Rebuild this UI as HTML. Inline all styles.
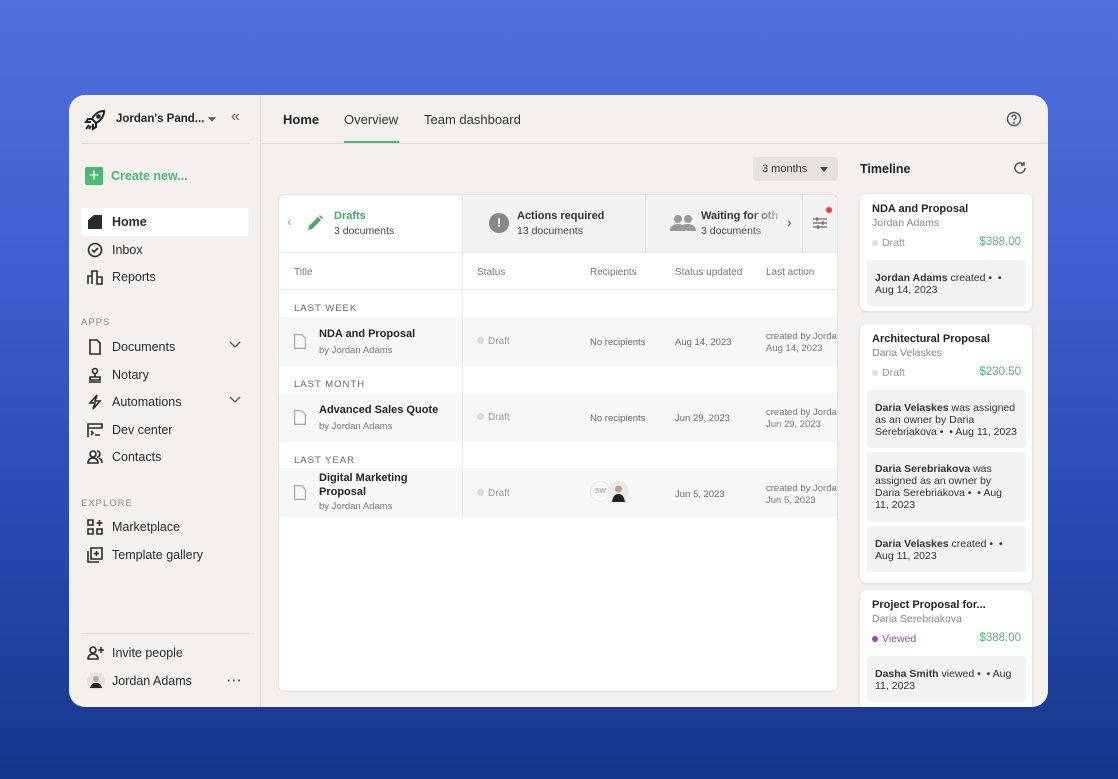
<!DOCTYPE html>
<html><head><meta charset="utf-8"><style>
*{box-sizing:border-box;margin:0;padding:0}
body{width:1118px;height:779px;overflow:hidden;font-family:"Liberation Sans",sans-serif;background:linear-gradient(180deg,#5070dc 0%,#3d5fd0 35%,#2548b0 70%,#15378a 100%);position:relative;color:#242424}
.frame{position:absolute;left:69px;top:95px;width:979px;height:612px;background:#f3f0ed;border-radius:16px;overflow:hidden}
.side{position:absolute;left:0;top:0;width:192px;height:612px;border-right:1px solid #e2ded9}
.abs{position:absolute}
.nav{position:absolute;left:12px;width:168px;height:28px;display:flex;align-items:center;font-size:12.5px;color:#2a2a2a}
.nav svg{position:absolute;left:6px}
.nav span{position:absolute;left:31px}
.sec{position:absolute;left:12px;font-size:9.5px;letter-spacing:1px;color:#8a8784}
.chev{position:absolute;right:10px;top:8px}
.t{position:absolute;white-space:nowrap}
.card{position:absolute;background:#fff;border-radius:6px;box-shadow:0 1px 3px rgba(0,0,0,.1)}
.ev{position:absolute;left:7px;right:6px;background:#f2f2f2;border-radius:4px;font-size:10.5px;line-height:12px;color:#333;padding:6px 8px}
.dot{display:inline-block;width:7px;height:7px;border-radius:50%;background:#ddd;margin-right:4px}
</style></head><body>
<div class="frame">
 <div class="side">
  <svg class="abs" style="left:14px;top:13px" width="24" height="24" viewBox="0 0 24 24" fill="none" stroke="#222" stroke-width="2"><path d="M21 3c-6 0-10 4-12 8l4 4c4-2 8-6 8-12z"/><circle cx="15.5" cy="8.5" r="1.3"/><path d="M9 11H5l-2 3h5M13 15v4l-3 2v-5"/><path d="M6 17l-3 4M8 18l-2 3" /></svg>
  <div class="t" style="left:47px;top:18px;font-size:11.5px;font-weight:bold">Jordan's Pand...</div>
  <div class="t" style="left:139px;top:22px;width:0;height:0;border-left:4px solid transparent;border-right:4px solid transparent;border-top:5px solid #666"></div>
  <div class="t" style="left:162px;top:13px;font-size:16px;color:#666">«</div>
  <div class="abs" style="left:12px;top:48px;width:168px;height:1px;background:#e0dcd7"></div>
  <div class="abs" style="left:16px;top:72px;width:18px;height:18px;background:#47bb6e;border-radius:2px;color:#fff;font-size:18px;line-height:17px;text-align:center">+</div>
  <div class="t" style="left:42px;top:74px;font-size:12.5px;font-weight:bold;color:#47bb6e">Create new...</div>
  <div class="nav" style="top:113px;background:#fff;border-radius:3px"><svg width="16" height="16" viewBox="0 0 16 16"><path d="M1 6l6-5h8v14H1z" fill="#2a2a2a"/></svg><span style="font-weight:bold">Home</span></div>
  <div class="nav" style="top:141px"><svg width="16" height="16" viewBox="0 0 16 16" fill="none" stroke="#2a2a2a" stroke-width="1.6"><circle cx="8" cy="8" r="6.5"/><path d="M5 8l2 2 4-4"/></svg><span>Inbox</span></div>
  <div class="nav" style="top:168px"><svg width="16" height="16" viewBox="0 0 16 16" fill="none" stroke="#2a2a2a" stroke-width="1.6"><path d="M1 15V7h4v8M5 15V2h5v13M10 15V8h5v7z"/></svg><span>Reports</span></div>
  <div class="sec" style="top:222px">APPS</div>
  <div class="nav" style="top:238px"><svg width="16" height="16" viewBox="0 0 16 16" fill="none" stroke="#2a2a2a" stroke-width="1.6"><path d="M3 1h7l3 3v11H3z"/></svg><span>Documents</span><svg class="chev" style="left:auto;right:8px" width="12" height="8" viewBox="0 0 12 8" fill="none" stroke="#555" stroke-width="1.3"><path d="M1 1l5 5 5-5"/></svg></div>
  <div class="nav" style="top:266px"><svg width="16" height="16" viewBox="0 0 16 16" fill="none" stroke="#2a2a2a" stroke-width="1.6"><circle cx="8" cy="4" r="2.5"/><path d="M8 6.5v3M3 10h10v3H3zM2 15h12"/></svg><span>Notary</span></div>
  <div class="nav" style="top:293px"><svg width="16" height="16" viewBox="0 0 16 16" fill="none" stroke="#2a2a2a" stroke-width="1.6"><path d="M10 1L3 9h5l-2 6 7-8H8z"/></svg><span>Automations</span><svg class="chev" style="left:auto;right:8px" width="12" height="8" viewBox="0 0 12 8" fill="none" stroke="#555" stroke-width="1.3"><path d="M1 1l5 5 5-5"/></svg></div>
  <div class="nav" style="top:321px"><svg width="16" height="16" viewBox="0 0 16 16" fill="none" stroke="#2a2a2a" stroke-width="1.6"><path d="M1 15V2h14v4H1M4 9l2 2-2 2M8 13h5"/></svg><span>Dev center</span></div>
  <div class="nav" style="top:348px"><svg width="16" height="16" viewBox="0 0 16 16" fill="none" stroke="#2a2a2a" stroke-width="1.6"><circle cx="6" cy="5" r="3"/><path d="M1 14c0-3 2-5 5-5s5 2 5 5zM10 2a3 3 0 010 6M12 9c2 1 3 3 3 5"/></svg><span>Contacts</span></div>
  <div class="sec" style="top:403px">EXPLORE</div>
  <div class="nav" style="top:418px"><svg width="16" height="16" viewBox="0 0 16 16" fill="none" stroke="#2a2a2a" stroke-width="1.6"><path d="M1 1h5v5H1zM1 10h5v5H1zM10 10h5v5h-5zM12.5 1v6M9.5 4h6"/></svg><span>Marketplace</span></div>
  <div class="nav" style="top:446px"><svg width="16" height="16" viewBox="0 0 16 16" fill="none" stroke="#2a2a2a" stroke-width="1.6"><path d="M4 1h11v11H4zM1 4v11h11M9.5 4v5M7 6.5h5"/></svg><span>Template gallery</span></div>
  <div class="abs" style="left:12px;top:538px;width:168px;height:1px;background:#e0dcd7"></div>
  <div class="nav" style="top:544px"><svg width="18" height="16" viewBox="0 0 18 16" fill="none" stroke="#2a2a2a" stroke-width="1.6"><circle cx="6" cy="5" r="3"/><path d="M1 14c0-3 2-5 5-5s5 2 5 5zM14 2v6M11 5h6"/></svg><span>Invite people</span></div>
  <div class="nav" style="top:572px"><svg width="18" height="18" viewBox="0 0 18 18"><circle cx="9" cy="9" r="9" fill="#dfe6e0"/><circle cx="9" cy="7" r="3" fill="#c9a58c"/><path d="M3 16c1-4 3-5 6-5s5 1 6 5z" fill="#222"/></svg><span>Jordan Adams</span><span style="left:146px;letter-spacing:1px;font-weight:bold;color:#555">···</span></div>
 </div>
 <div class="t" style="left:214px;top:17px;font-size:13px;font-weight:bold">Home</div>
 <div class="t" style="left:275px;top:17px;font-size:13px;color:#333">Overview</div>
 <div class="abs" style="left:275px;top:46px;width:55px;height:3px;background:#47bb6e"></div>
 <div class="t" style="left:355px;top:17px;font-size:13px;color:#333">Team dashboard</div>
 <svg class="abs" style="left:937px;top:16px" width="16" height="16" viewBox="0 0 16 16" fill="none" stroke="#555" stroke-width="1.4"><circle cx="8" cy="8" r="6.5"/><path d="M6 6.2a2 2 0 113 1.7c-.8.4-1 .8-1 1.6"/><circle cx="8" cy="11.8" r=".4"/></svg>
 <div class="abs" style="left:193px;top:48px;width:786px;height:1px;background:#e2ded9"></div>
 <div class="abs" style="left:684px;top:62px;width:85px;height:24px;background:#e6e3df;border-radius:4px;font-size:11px;color:#333;padding:6px 9px">3 months<span style="position:absolute;right:10px;top:10px;border-left:4px solid transparent;border-right:4px solid transparent;border-top:5px solid #444"></span></div>
 <div class="abs" style="left:209px;top:99px;width:560px;height:498px;background:#fff;border-radius:6px;border:1px solid #e6e3df;overflow:hidden">
  <div class="abs" style="left:183px;top:0;width:377px;height:57px;background:#f2f2f2;border-bottom:1px solid #e6e6e6"></div>
  <div class="abs" style="left:0;top:57px;width:560px;height:1px;background:#ececec"></div>
  <div class="abs" style="left:183px;top:0;width:1px;height:322px;background:#e8e8e8"></div>
  <div class="abs" style="left:366px;top:0;width:1px;height:57px;background:#e2e2e2"></div>
  <div class="abs" style="left:523px;top:0;width:1px;height:57px;background:#e2e2e2"></div>
  <div class="t" style="left:8px;top:18px;font-size:14px;color:#aaa">‹</div>
  <svg class="abs" style="left:26px;top:18px" width="20" height="20" viewBox="0 0 20 20"><path d="M3 17l1-4 9-9 3 3-9 9z" fill="#47a96a"/><path d="M15 2l3 3-1 1-3-3z" fill="#47a96a"/></svg>
  <div class="t" style="left:55px;top:15px;font-size:11px;font-weight:bold;color:#47a96a">Drafts</div>
  <div class="t" style="left:55px;top:30px;font-size:10.5px;color:#444">3 documents</div>
  <div class="abs" style="left:210px;top:18px;width:20px;height:20px;border-radius:50%;background:#888;color:#fff;font-weight:bold;font-size:13px;text-align:center;line-height:20px">!</div>
  <div class="t" style="left:238px;top:15px;font-size:11px;font-weight:bold;color:#333">Actions required</div>
  <div class="t" style="left:238px;top:30px;font-size:10.5px;color:#444">13 documents</div>
  <svg class="abs" style="left:391px;top:19px" width="26" height="18" viewBox="0 0 26 18" fill="#999"><circle cx="8" cy="5" r="4"/><circle cx="18" cy="5" r="4"/><path d="M0 17c0-5 4-7 8-7s8 2 8 7zM13 11c2-1 4-1 5-1 4 0 8 2 8 7h-9z"/></svg>
  <div class="t" style="left:422px;top:15px;font-size:11px;font-weight:bold;color:#333">Waiting for oth</div>
  <div class="t" style="left:422px;top:30px;font-size:10.5px;color:#444">3 documents</div>
  <div class="abs" style="left:470px;top:10px;width:40px;height:40px;background:linear-gradient(90deg,rgba(242,242,242,0),#f2f2f2)"></div>
  <div class="t" style="left:508px;top:19px;font-size:14px;color:#555">›</div>
  <svg class="abs" style="left:534px;top:21px" width="14" height="14" viewBox="0 0 14 14" stroke="#666" stroke-width="1.3"><path d="M0 3h14M0 7h14M0 11h14M4 1v4M10 5v4M5 9v4"/></svg>
  <div class="abs" style="left:547px;top:12px;width:6px;height:6px;border-radius:50%;background:#e94040"></div>
  <div class="t" style="left:15px;top:72px;font-size:10px;color:#777">Title</div>
  <div class="t" style="left:198px;top:72px;font-size:10px;color:#777">Status</div>
  <div class="t" style="left:311px;top:72px;font-size:10px;color:#777">Recipients</div>
  <div class="t" style="left:396px;top:72px;font-size:10px;color:#777">Status updated</div>
  <div class="t" style="left:487px;top:72px;font-size:10px;color:#777">Last action</div>
  <div class="abs" style="left:0;top:94px;width:560px;height:1px;background:#ececec"></div>
  <div class="t" style="left:15px;top:108px;font-size:9.5px;letter-spacing:1px;color:#666">LAST WEEK</div>
  <div class="abs" style="left:0;top:122px;width:560px;height:49px;background:#f7f7f7"></div>
  <div class="t" style="left:15px;top:184px;font-size:9.5px;letter-spacing:1px;color:#666">LAST MONTH</div>
  <div class="abs" style="left:0;top:198px;width:560px;height:49px;background:#f7f7f7"></div>
  <div class="t" style="left:15px;top:260px;font-size:9.5px;letter-spacing:1px;color:#666">LAST YEAR</div>
  <div class="abs" style="left:0;top:273px;width:560px;height:49px;background:#f7f7f7"></div>
  <div class="abs" style="left:183px;top:95px;width:1px;height:227px;background:#ebebeb"></div>

  <svg class="abs" style="left:15px;top:139px" width="12" height="15" viewBox="0 0 12 15" fill="none" stroke="#aaa" stroke-width="1.2"><path d="M.6.6h7l3.8 3.8v10H.6z"/></svg>
  <div class="t" style="left:40px;top:133px;font-size:11px;font-weight:bold">NDA and Proposal</div>
  <div class="t" style="left:40px;top:150px;font-size:9.5px;color:#777">by Jordan Adams</div>
  <div class="t" style="left:198px;top:141px;font-size:10px;color:#999"><span class="dot"></span>Draft</div>
  <div class="t" style="left:311px;top:142px;font-size:9.5px;color:#666">No recipients</div>
  <div class="t" style="left:396px;top:142px;font-size:9.5px;color:#666">Aug 14, 2023</div>
  <div class="t" style="left:487px;top:136px;font-size:9.5px;color:#777;line-height:12px">created by Jorda<br>Aug 14, 2023</div>

  <svg class="abs" style="left:15px;top:215px" width="12" height="15" viewBox="0 0 12 15" fill="none" stroke="#aaa" stroke-width="1.2"><path d="M.6.6h7l3.8 3.8v10H.6z"/></svg>
  <div class="t" style="left:40px;top:209px;font-size:11px;font-weight:bold">Advanced Sales Quote</div>
  <div class="t" style="left:40px;top:226px;font-size:9.5px;color:#777">by Jordan Adams</div>
  <div class="t" style="left:198px;top:217px;font-size:10px;color:#999"><span class="dot"></span>Draft</div>
  <div class="t" style="left:311px;top:218px;font-size:9.5px;color:#666">No recipients</div>
  <div class="t" style="left:396px;top:218px;font-size:9.5px;color:#666">Jun 29, 2023</div>
  <div class="t" style="left:487px;top:212px;font-size:9.5px;color:#777;line-height:12px">created by Jorda<br>Jun 29, 2023</div>

  <svg class="abs" style="left:15px;top:290px" width="12" height="15" viewBox="0 0 12 15" fill="none" stroke="#aaa" stroke-width="1.2"><path d="M.6.6h7l3.8 3.8v10H.6z"/></svg>
  <div class="t" style="left:40px;top:277px;font-size:11px;font-weight:bold;line-height:13.5px">Digital Marketing<br>Proposal</div>
  <div class="t" style="left:40px;top:306px;font-size:9.5px;color:#777">by Jordan Adams</div>
  <div class="t" style="left:198px;top:293px;font-size:10px;color:#999"><span class="dot"></span>Draft</div>
  <div class="abs" style="left:311px;top:286px;width:21px;height:21px;border-radius:50%;border:1px solid #e8e8e8;background:#f7f7f7;font-size:7px;color:#999;text-align:center;line-height:19px">SW</div>
  <svg class="abs" style="left:329px;top:286px" width="21" height="21" viewBox="0 0 21 21"><circle cx="10.5" cy="10.5" r="10.5" fill="#e8ece8"/><circle cx="10.5" cy="8" r="3.5" fill="#c49a80"/><path d="M4 21c1-6 3-8 6.5-8s5.5 2 6.5 8z" fill="#222"/></svg>
  <div class="t" style="left:396px;top:294px;font-size:9.5px;color:#666">Jun 5, 2023</div>
  <div class="t" style="left:487px;top:288px;font-size:9.5px;color:#777;line-height:12px">created by Jorda<br>Jun 5, 2023</div>
 </div>
 <div class="t" style="left:791px;top:67px;font-size:12.5px;font-weight:bold">Timeline</div>
 <svg class="abs" style="left:944px;top:66px" width="14" height="14" viewBox="0 0 14 14" fill="none" stroke="#555" stroke-width="1.5"><path d="M12 7a5 5 0 11-1.5-3.6"/><path d="M11 1v3H8"/></svg>
 <div class="card" style="left:791px;top:99px;width:172px;height:117px">
  <div class="t" style="left:12px;top:9px;font-size:11px;font-weight:bold">NDA and Proposal</div>
  <div class="t" style="left:12px;top:23px;font-size:10.5px;color:#888">Jordan Adams</div>
  <div class="t" style="left:12px;top:43px;font-size:10.5px;color:#999"><span class="dot" style="width:6px;height:6px"></span>Draft</div>
  <div class="t" style="right:11px;top:42px;font-size:11.5px;color:#4cbb72">$388.00</div>
  <div class="ev" style="top:66px;height:46px;padding-top:12px"><b>Jordan Adams</b> created • &nbsp;•<br>Aug 14, 2023</div>
 </div>
 <div class="card" style="left:791px;top:229px;width:172px;height:259px">
  <div class="t" style="left:12px;top:9px;font-size:11px;font-weight:bold">Architectural Proposal</div>
  <div class="t" style="left:12px;top:23px;font-size:10.5px;color:#888">Daria Velaskes</div>
  <div class="t" style="left:12px;top:43px;font-size:10.5px;color:#999"><span class="dot" style="width:6px;height:6px"></span>Draft</div>
  <div class="t" style="right:11px;top:42px;font-size:11.5px;color:#4cbb72">$230.50</div>
  <div class="ev" style="top:66px;height:58px;padding-top:12px"><b>Daria Velaskes</b> was assigned as an owner by Daria Serebriakova • &nbsp;• Aug 11, 2023</div>
  <div class="ev" style="top:128px;height:70px;padding-top:11px"><b>Daria Serebriakova</b> was assigned as an owner by Daria Serebriakova • &nbsp;• Aug 11, 2023</div>
  <div class="ev" style="top:202px;height:46px;padding-top:12px"><b>Daria Velaskes</b> created • &nbsp;•<br>Aug 11, 2023</div>
 </div>
 <div class="card" style="left:791px;top:495px;width:172px;height:130px">
  <div class="t" style="left:12px;top:9px;font-size:11px;font-weight:bold">Project Proposal for...</div>
  <div class="t" style="left:12px;top:23px;font-size:10.5px;color:#888">Daria Serebriakova</div>
  <div class="t" style="left:12px;top:43px;font-size:10.5px;color:#a044b8"><span class="dot" style="width:6px;height:6px;background:#a044b8"></span>Viewed</div>
  <div class="t" style="right:11px;top:42px;font-size:11.5px;color:#4cbb72">$388.00</div>
  <div class="ev" style="top:66px;height:46px;padding-top:12px"><b>Dasha Smith</b> viewed • &nbsp;• Aug 11, 2023</div>
 </div>
</div>
</body></html>
